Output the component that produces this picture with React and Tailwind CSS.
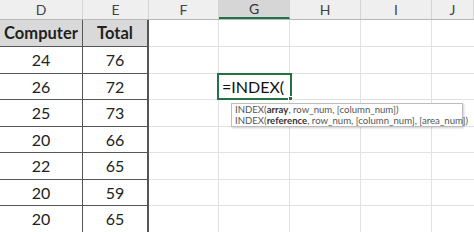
const cols = [
  { key: "D", w: "w-[83px]" },
  { key: "E", w: "w-[66px]" },
  { key: "F", w: "w-[70px]" },
  { key: "G", w: "w-[71px]" },
  { key: "H", w: "w-[71px]" },
  { key: "I", w: "w-[71px]" },
  { key: "J", w: "flex-1" },
];

const data = [
  ["24", "76"],
  ["26", "72"],
  ["25", "73"],
  ["20", "66"],
  ["22", "65"],
  ["20", "59"],
  ["20", "65"],
];

const heights = ["h-[27px]", "h-[26px]", "h-[27px]", "h-[26px]", "h-[27px]", "h-[26px]", "h-[27px]"];

export default function App() {
  return (
    <div className="w-[474px] h-[232px] overflow-hidden bg-white font-['Lato','Carlito',sans-serif] text-[#222]">
      {/* column headers */}
      <div className="flex h-[20px] bg-[#efefef] border-b border-[#b8b8b8]">
        {cols.map((c) => (
          <div
            key={c.key}
            className={`${c.w} shrink-0 flex items-center justify-center text-[14px] border-r border-[#d4d4d4] ${
              c.key === "G" ? "bg-[#d6d6d6] border-b-2 border-b-[#217346] text-[#333]" : "text-[#444]"
            }`}
          >
            {c.key}
          </div>
        ))}
      </div>

      {/* title row */}
      <div className="flex h-[27px]">
        <div className="w-[83px] shrink-0 bg-[#d9d9d9] border-r border-b border-[#555] flex items-center justify-center font-bold text-[16.5px]">
          Computer
        </div>
        <div className="w-[66px] shrink-0 bg-[#d9d9d9] border-r-2 border-b border-[#555] flex items-center justify-center font-bold text-[16.5px]">
          Total
        </div>
        <div className="w-[70px] shrink-0 border-r border-b border-[#e2e2e2]" />
        <div className="w-[71px] shrink-0 border-r border-b border-[#e2e2e2]" />
        <div className="w-[71px] shrink-0 border-r border-b border-[#e2e2e2]" />
        <div className="w-[71px] shrink-0 border-r border-b border-[#e2e2e2]" />
        <div className="flex-1 border-b border-[#e2e2e2]" />
      </div>

      {data.map((row, i) => (
        <div key={i} className={`flex ${heights[i]}`}>
          <div className="w-[83px] shrink-0 border-r border-b border-[#555] flex items-center justify-center text-[16px]">
            {row[0]}
          </div>
          <div className="w-[66px] shrink-0 border-r-2 border-b border-[#555] flex items-center justify-center text-[16px]">
            {row[1]}
          </div>
          <div className="w-[70px] shrink-0 border-r border-b border-[#e2e2e2]" />
          <div className="w-[71px] shrink-0 border-r border-b border-[#e2e2e2] relative">
            {i === 1 && (
              <>
                <div className="absolute -left-[2px] -top-[1px] w-[75px] h-[27px] border-2 border-[#217346] bg-white flex items-center pl-[3px] text-[16px] text-[#111] z-10">
                  =INDEX(
                  <div className="absolute -right-[3px] -bottom-[3px] w-[5px] h-[5px] bg-[#217346] border border-white" />
                </div>
                <div className="absolute left-[12px] top-[29px] w-[232px] h-[24px] bg-white border border-[#bdbdbd] shadow-[1px_1px_2px_rgba(0,0,0,0.2)] z-20 px-[3px] flex flex-col justify-center text-[9.6px] leading-[11px] text-[#555] whitespace-nowrap font-['Lato',sans-serif]">
                  <div>
                    INDEX(<span className="font-bold text-[#333]">array</span>, row_num, [column_num])
                  </div>
                  <div>
                    INDEX(<span className="font-bold text-[#333]">reference</span>, row_num, [column_num], [area_num])
                  </div>
                </div>
              </>
            )}
          </div>
          <div className="w-[71px] shrink-0 border-r border-b border-[#e2e2e2]" />
          <div className="w-[71px] shrink-0 border-r border-b border-[#e2e2e2]" />
          <div className="flex-1 border-b border-[#e2e2e2]" />
        </div>
      ))}
    </div>
  );
}
